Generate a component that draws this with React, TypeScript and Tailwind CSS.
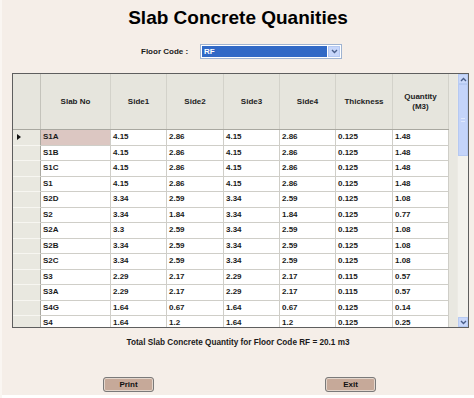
import { useState } from "react";

type Slab = { no: string; s1: string; s2: string; s3: string; s4: string; t: string; q: string };

const slabs: Slab[] = [
    { no: "S1A", s1: "4.15", s2: "2.86", s3: "4.15", s4: "2.86", t: "0.125", q: "1.48" },
    { no: "S1B", s1: "4.15", s2: "2.86", s3: "4.15", s4: "2.86", t: "0.125", q: "1.48" },
    { no: "S1C", s1: "4.15", s2: "2.86", s3: "4.15", s4: "2.86", t: "0.125", q: "1.48" },
    { no: "S1", s1: "4.15", s2: "2.86", s3: "4.15", s4: "2.86", t: "0.125", q: "1.48" },
    { no: "S2D", s1: "3.34", s2: "2.59", s3: "3.34", s4: "2.59", t: "0.125", q: "1.08" },
    { no: "S2", s1: "3.34", s2: "1.84", s3: "3.34", s4: "1.84", t: "0.125", q: "0.77" },
    { no: "S2A", s1: "3.3", s2: "2.59", s3: "3.34", s4: "2.59", t: "0.125", q: "1.08" },
    { no: "S2B", s1: "3.34", s2: "2.59", s3: "3.34", s4: "2.59", t: "0.125", q: "1.08" },
    { no: "S2C", s1: "3.34", s2: "2.59", s3: "3.34", s4: "2.59", t: "0.125", q: "1.08" },
    { no: "S3", s1: "2.29", s2: "2.17", s3: "2.29", s4: "2.17", t: "0.115", q: "0.57" },
    { no: "S3A", s1: "2.29", s2: "2.17", s3: "2.29", s4: "2.17", t: "0.115", q: "0.57" },
    { no: "S4G", s1: "1.64", s2: "0.67", s3: "1.64", s4: "0.67", t: "0.125", q: "0.14" },
    { no: "S4", s1: "1.64", s2: "1.2", s3: "1.64", s4: "1.2", t: "0.125", q: "0.25" },
];

const cols = "grid grid-cols-[28px_70px_56px_57px_56px_56px_57px_56px] w-[436px]";

function Chevron({ up }: { up?: boolean }) {
    return (
        <svg width="7" height="5" viewBox="0 0 7 5" className={up ? "rotate-180" : ""}>
            <path d="M1 1 L3.5 3.5 L6 1" fill="none" stroke="#4a5f8a" strokeWidth="1.4" />
        </svg>
    );
}

function App() {
    const [selected] = useState<number>(0);

    return (
        <div className="w-[474px] h-[398px] bg-[#f5eee8] flex flex-col font-['Liberation_Sans',Arial,sans-serif] text-[#1a1a1a] overflow-hidden border-l-[2px] border-[#faf6f2]">
            <h1 className="pt-[7px] h-[29px] text-[19px] leading-[22px] font-bold text-center text-black">Slab Concrete Quanities</h1>

            <div className="mt-[15px] h-[15px] flex items-center pl-[139px]">
                <span className="text-[8px] font-bold w-[59px]">Floor Code :</span>
                <div className="w-[142px] h-[15px] border border-[#9fb3d1] bg-white flex items-stretch p-[1px]">
                    <div className="flex-1 bg-[#3169c6] text-white text-[8px] font-bold leading-[11px] pl-[2px]">RF</div>
                    <div className="w-[12px] ml-[1px] bg-[#c7d6fa] border border-[#b4c8f2] flex items-center justify-center">
                        <Chevron />
                    </div>
                </div>
            </div>

            <div className="mt-[14px] ml-[10px] w-[457px] h-[255px] border border-[#5e5e5e] bg-[#e9e8e1] flex overflow-hidden">
                <div className="w-[444px] overflow-hidden">
                    <div className={`${cols} h-[56px] bg-[#e6e5dd] border-b border-[#a9a8a0]`}>
                        <div className="border-r border-[#c4c3bb]" />
                        {["Slab No", "Side1", "Side2", "Side3", "Side4", "Thickness", "Quantity\n(M3)"].map(h => (
                            <div key={h} className="border-r border-[#d3d2ca] flex items-center justify-center text-center text-[8px] font-bold leading-[10px] whitespace-pre-line text-[#222]">{h}</div>
                        ))}
                    </div>
                    {slabs.map((s, i) => (
                        <div key={s.no} className={`${cols} h-[15.5px] text-[8px] font-bold leading-[14px]`}>
                            <div className="bg-[#e9e8e0] border-r border-[#a9a8a0] border-b border-b-[#f7f6f1] flex items-center pl-[4px]">
                                {i === selected && (
                                    <svg width="4" height="6" viewBox="0 0 4 6"><path d="M0 0 L4 3 L0 6 Z" fill="#111" /></svg>
                                )}
                            </div>
                            {[s.no, s.s1, s.s2, s.s3, s.s4, s.t, s.q].map((v, j) => (
                                <div key={j} className={`${i === selected && j === 0 ? "bg-[#dcc7c2]" : "bg-white"} border-r border-b border-[#cfcec8] pl-[2px]`}>{v}</div>
                            ))}
                        </div>
                    ))}
                </div>
                <div className="w-[11px] bg-[#f3f2ed] flex flex-col border-l border-[#eceae4]">
                    <div className="h-[10px] bg-[#c9d8fb] border border-[#b7cbf3] flex items-center justify-center"><Chevron up /></div>
                    <div className="h-[72px] bg-[#c4d4fa] border border-[#b5c9f2] flex items-center justify-center">
                        <div className="w-[4px] h-[4px] border-y border-[#dfe8fd]" />
                    </div>
                    <div className="flex-1" />
                    <div className="h-[10px] bg-[#c9d8fb] border border-[#b7cbf3] flex items-center justify-center"><Chevron /></div>
                </div>
            </div>

            <p className="mt-[10px] h-[10px] text-[8.2px] leading-[10px] font-bold text-center">Total Slab Concrete Quantity for Floor Code RF = 20.1 m3</p>

            <div className="mt-[29px] h-[15px] flex gap-[171px] pl-[101px]">
                <button className="w-[51px] h-[15px] rounded-[3px] border border-[#7a7a7a] bg-[#c6a999] shadow-[inset_0_0_0_1px_#e4d6cc] text-[8px] font-bold text-[#111] leading-[12px]">Print</button>
                <button className="w-[51px] h-[15px] rounded-[3px] border border-[#7a7a7a] bg-[#c6a999] shadow-[inset_0_0_0_1px_#e4d6cc] text-[8px] font-bold text-[#111] leading-[12px]">Exit</button>
            </div>

            <div className="mt-auto h-[3px] bg-white" />
        </div>
    );
}

export default App;
